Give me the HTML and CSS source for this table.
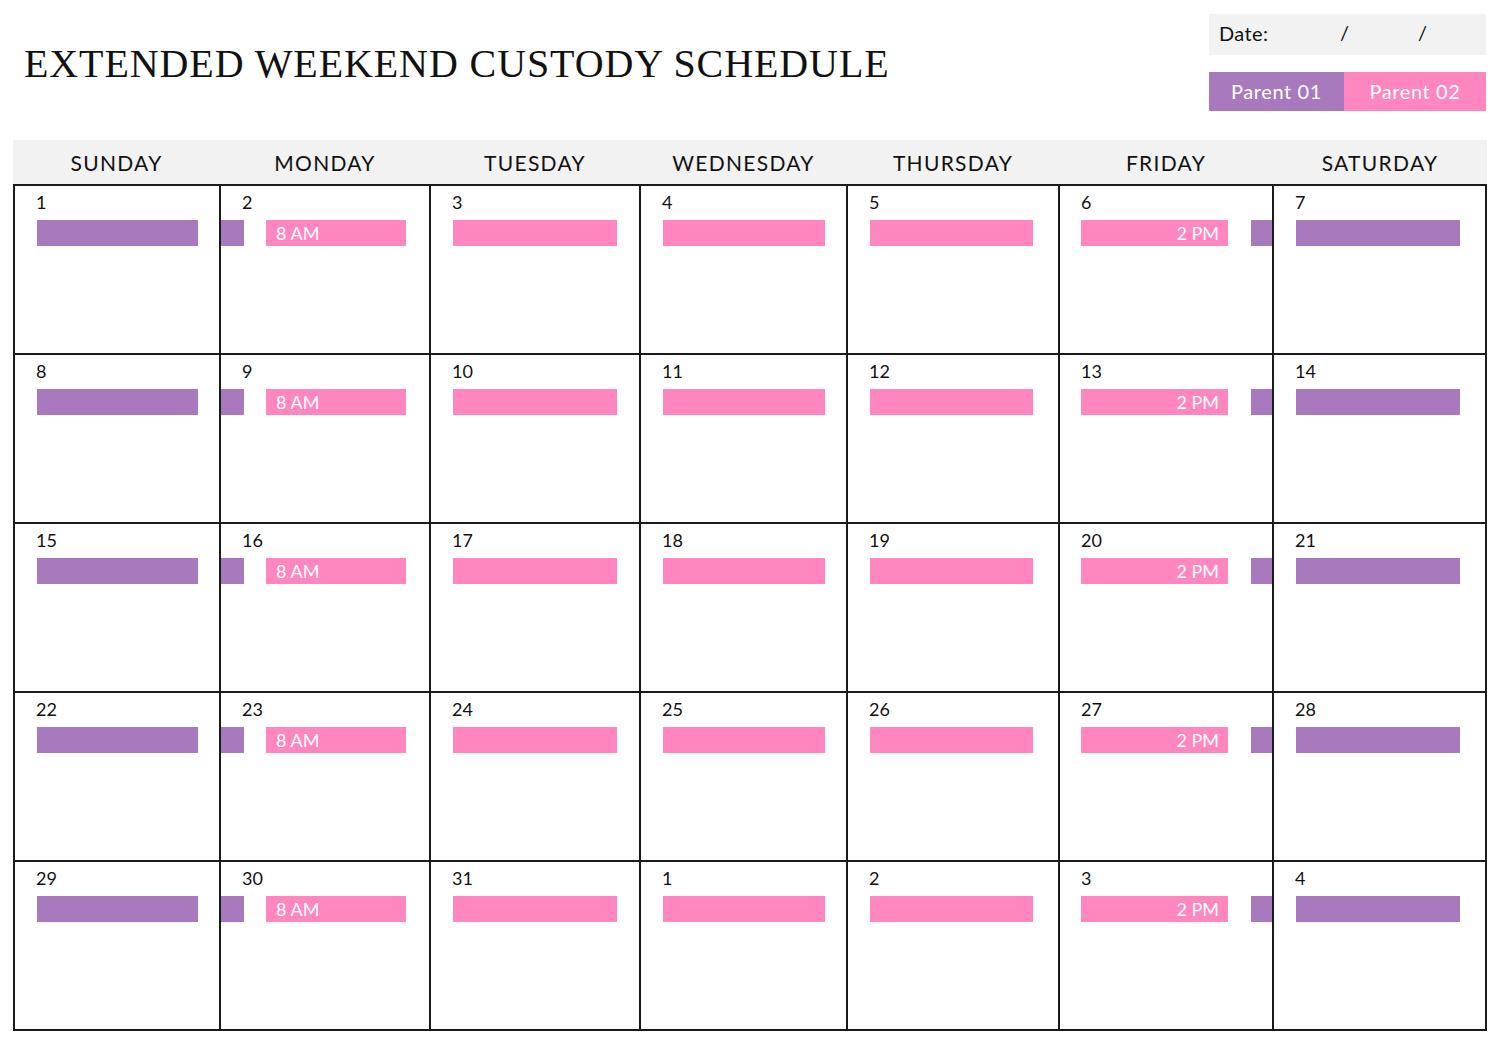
FILE: index.html
```html
<!DOCTYPE html>
<html>
<head>
<meta charset="utf-8">
<link rel="stylesheet" href="styles.css">
</head>
<body>
<div class="page">
  <header class="top">
    <h1 class="title">EXTENDED WEEKEND CUSTODY SCHEDULE</h1>
    <div class="meta">
      <div class="date"><span class="date-label">Date:</span><span class="slash s1">/</span><span class="slash s2">/</span></div>
      <div class="legend">
        <div class="legend-item p1">Parent 01</div>
        <div class="legend-item p2">Parent 02</div>
      </div>
    </div>
  </header>

  <div class="days">
    <div class="day">SUNDAY</div>
    <div class="day">MONDAY</div>
    <div class="day">TUESDAY</div>
    <div class="day">WEDNESDAY</div>
    <div class="day">THURSDAY</div>
    <div class="day">FRIDAY</div>
    <div class="day">SATURDAY</div>
  </div>

  <div class="grid" id="grid">
  </div>
</div>
<script src="app.js"></script>
</body>
</html>
```

FILE: app.js
```js
(function () {
  var weeks = [
    [1, 2, 3, 4, 5, 6, 7],
    [8, 9, 10, 11, 12, 13, 14],
    [15, 16, 17, 18, 19, 20, 21],
    [22, 23, 24, 25, 26, 27, 28],
    [29, 30, 31, 1, 2, 3, 4]
  ];
  var grid = document.getElementById('grid');
  weeks.forEach(function (w) {
    w.forEach(function (n, d) {
      var cell = document.createElement('div');
      cell.className = 'cell c' + d;
      var num = document.createElement('div');
      num.className = 'num';
      num.textContent = n;
      cell.appendChild(num);
      var lane = document.createElement('div');
      lane.className = 'lane';
      var html = '';
      if (d === 0 || d === 6) {
        html = '<div class="bar purple full"></div>';
      } else if (d === 1) {
        html = '<div class="bar purple stub-left"></div><div class="bar pink mon">8 AM</div>';
      } else if (d === 5) {
        html = '<div class="bar pink fri">2 PM</div><div class="bar purple stub-right"></div>';
      } else {
        html = '<div class="bar pink full"></div>';
      }
      lane.innerHTML = html;
      cell.appendChild(lane);
      grid.appendChild(cell);
    });
  });
})();
```

FILE: styles.css
```css
* { box-sizing: border-box; }
html, body { margin: 0; padding: 0; background: #ffffff; }
body {
  font-family: "Lato", "Noto Sans", sans-serif;
  color: #111111;
  width: 1500px;
  height: 1062px;
  overflow: hidden;
}
.page { padding: 14px 13px 0 13px; }

.top {
  display: flex;
  justify-content: space-between;
  align-items: flex-start;
  height: 126px;
}
.title {
  margin: 0;
  padding: 27px 0 0 11px;
  font-family: "Liberation Serif", "DejaVu Serif", serif;
  font-weight: normal;
  font-size: 40px;
  line-height: 46px;
  letter-spacing: 0.9px;
  color: #111111;
}
.meta {
  width: 277px;
  margin-right: 1px;
  display: flex;
  flex-direction: column;
  gap: 17px;
}
.date {
  position: relative;
  height: 41px;
  background: #f2f2f2;
  display: flex;
  align-items: center;
  padding-left: 10px;
  padding-bottom: 3px;
  font-size: 20px;
  letter-spacing: 0.4px;
  color: #111;
}
.slash { position: absolute; top: 6px; font-size: 20px; }
.s1 { left: 131px; }
.s2 { left: 209px; }
.legend { display: flex; height: 39px; }
.legend-item {
  display: flex;
  align-items: center;
  justify-content: center;
  color: #ffffff;
  font-size: 20px;
  letter-spacing: 0.6px;
  padding-bottom: 2px;
}
.p1 { width: 135px; background: #a879bc; }
.p2 { flex: 1; background: #ff86be; }

.days {
  display: grid;
  grid-template-columns: 207px 210px 210px 207px 212px 214px 214px;
  height: 44px;
  background: #f2f2f2;
}
.day {
  display: flex;
  align-items: center;
  justify-content: center;
  font-size: 21px;
  letter-spacing: 1.3px;
  color: #111;
  padding-top: 1px;
}

.grid {
  display: grid;
  grid-template-columns: 206px 210px 210px 207px 212px 214px 213px;
  grid-auto-rows: 169px;
  border-top: 2px solid #1a1a1a;
  border-left: 2px solid #1a1a1a;
  width: 1474px;
}
.cell {
  border-right: 2px solid #1a1a1a;
  border-bottom: 2px solid #1a1a1a;
  display: flex;
  flex-direction: column;
}
.num {
  font-size: 18px;
  line-height: 20px;
  height: 20px;
  margin-top: 6px;
  padding-left: 21px;
  color: #111;
}
.lane {
  position: relative;
  height: 26px;
  margin-top: 8px;
}
.bar {
  position: absolute;
  top: 0;
  height: 26px;
  color: #ffffff;
  font-size: 18px;
  line-height: 26px;
}
.purple { background: #a879bc; }
.pink { background: #ff86be; }
.full { left: 22px; width: 162px; }
.c0 .full { left: 22px; width: 161px; }
.c2 .full, .c6 .full { width: 164px; }
.c4 .full { width: 163px; }
.stub-left { left: 0; width: 23px; }
.mon { left: 45px; width: 140px; padding-left: 10px; }
.fri { left: 21px; width: 147px; text-align: right; padding-right: 9px; }
.stub-right { left: 191px; right: 0; }
```
